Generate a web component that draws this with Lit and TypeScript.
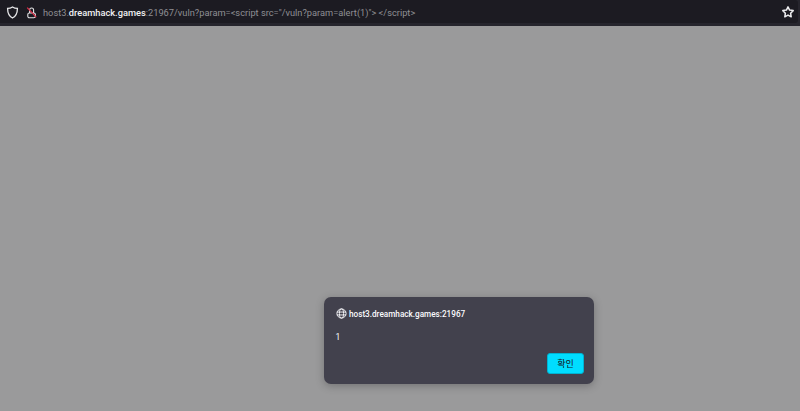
import { LitElement, html, css } from "lit";
import { customElement } from "lit/decorators.js";

@customElement("app-root")
export class AppRoot extends LitElement {
  static styles = css`
    :host { display: block; width: 800px; height: 411px; overflow: hidden; font-family: "Noto Sans CJK KR", "Open Sans", sans-serif; }
    .page { height: 411px; display: flex; flex-direction: column; background: #9a9a9b; }
    .toolbar { height: 26px; flex: none; box-sizing: border-box; background: #26252d; padding: 0 0 3px 0; display: flex; }
    .urlbar { flex: 1; display: flex; align-items: center; background: #1c1b22; padding: 1px 3px 0 5px; margin: 0 2px 0 0; border-radius: 0 3px 3px 0; }
    .shield { width: 15px; height: 15px; margin-right: 4px; flex: none; }
    .lock { width: 15px; height: 15px; margin-right: 4px; flex: none; }
    .url { font-family: "Roboto", "Liberation Sans", sans-serif; font-size: 9.28px; color: #8f8f94; white-space: nowrap; flex: 1; }
    .url b { color: #f0f0f2; font-weight: 500; }
    .star { width: 14px; height: 14px; flex: none; }
    .overlay { flex: 1; display: flex; justify-content: flex-start; align-items: flex-end; padding: 0 0 27px 324px; }
    .dialog { width: 270px; height: 87px; box-sizing: border-box; background: #42414d; border-radius: 7px; box-shadow: 0 2px 8px rgba(0,0,0,.25); padding: 10px 10px 10px 12px; display: flex; flex-direction: column; color: #fbfbfe; }
    .origin { display: flex; align-items: center; gap: 2px; font-family: "Roboto", "Liberation Sans", sans-serif; font-size: 8.18px; font-weight: 500; height: 13px; }
    .origin svg { width: 11px; height: 11px; flex: none; }
    .msg { font-family: "Roboto", "Liberation Sans", sans-serif; font-size: 8.5px; margin: 11px 0 0 -0.5px; height: 12px; line-height: 12px; }
    .actions { margin-top: auto; display: flex; justify-content: flex-end; }
    .btn { width: 37px; height: 21px; box-sizing: border-box; margin: 0; padding: 0; border: 1px solid #00b3d1; border-radius: 3px; background: #00ddff; color: #15141a; font-family: "Noto Sans CJK KR", sans-serif; font-size: 9px; display: flex; align-items: center; justify-content: center; }
  `;
  render() {
    return html`<div class="page">
      <div class="toolbar"><div class="urlbar">
        <svg class="shield" viewBox="0 0 15 15" fill="none" stroke="#e6e6e8" stroke-width="1.3"><path d="M7.5 2 C9 3 10.6 3.4 12.4 3.4 C12.4 8 11.2 11 7.5 13 C3.8 11 2.6 8 2.6 3.4 C4.4 3.4 6 3 7.5 2 Z"/></svg>
        <svg class="lock" viewBox="0 0 15 15" fill="none"><path d="M5.6 8 V5 a2 2 0 0 1 4 0 V8" stroke="#e4e4e6" stroke-width="1.1"/><rect x="3.8" y="8" width="7.6" height="4.8" rx="1.6" stroke="#e4e4e6" stroke-width="1.1"/><path d="M3.2 2.6 L12.2 12.2" stroke="#e2304a" stroke-width="1.2"/></svg>
        <span class="url">host3.<b>dreamhack.games</b>:21967/vuln?param=&lt;script src="/vuln?param=alert(1)"&gt; &lt;/script&gt;</span>
        <svg class="star" viewBox="0 0 14 14" fill="none" stroke="#eeeef0" stroke-width="1.5" stroke-linejoin="round"><path d="M7 1.8 L8.6 5.1 L12.2 5.6 L9.6 8.2 L10.2 11.8 L7 10.1 L3.8 11.8 L4.4 8.2 L1.8 5.6 L5.4 5.1 Z"/></svg>
      </div></div>
      <div class="overlay">
        <div class="dialog">
          <div class="origin">
            <svg viewBox="0 0 12 12" fill="none" stroke="#fbfbfe" stroke-width="1"><circle cx="6" cy="6" r="5"/><ellipse cx="6" cy="6" rx="2.3" ry="5"/><path d="M1 4.4 H11 M1 7.6 H11"/></svg>
            <span>host3.dreamhack.games:21967</span>
          </div>
          <div class="msg">1</div>
          <div class="actions"><button class="btn">확인</button></div>
        </div>
      </div>
    </div>`;
  }
}
